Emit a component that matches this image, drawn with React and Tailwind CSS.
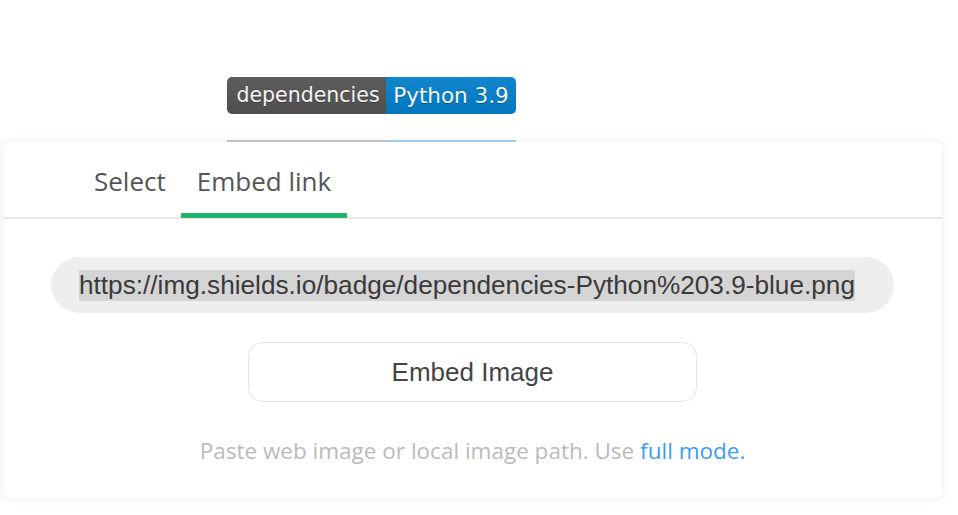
export default function App() {
  return (
    <div className="w-[958px] h-[515px] bg-white relative overflow-hidden">
      <div className="h-[142px] relative">
        <div
          className="absolute left-[227px] top-[77px] h-[37px] flex rounded-[5px] overflow-hidden text-[#f4f4f4] text-[20.5px] leading-[37px]"
          style={{ fontFamily: '"DejaVu Sans", Verdana, sans-serif' }}
        >
          <div className="w-[159px] pl-[3px] bg-gradient-to-b from-[#5c5c5c] to-[#4f4f4f] flex items-center justify-center [text-shadow:0_1px_0_rgba(1,1,1,0.3)]">
            dependencies
          </div>
          <div className="w-[130px] bg-gradient-to-b from-[#1286cc] to-[#0077bf] flex items-center justify-center text-[21.5px] [text-shadow:0_1px_0_rgba(1,1,1,0.3)]">
            Python 3.9
          </div>
        </div>
        <div className="absolute left-[227px] top-[140px] h-[2px] flex">
          <div className="w-[159px] bg-[#c8c8c8]" />
          <div className="w-[130px] bg-[#a8d4f0]" />
        </div>
      </div>
      <div className="ml-[3px] w-[939px] h-[356px] bg-white rounded-[5px] shadow-[0_0_10px_rgba(0,0,0,0.09)] relative">
        <div
          className="h-[77px] border-b-2 border-[#e8e8e8] flex items-end pl-[74px]"
          style={{ fontFamily: '"Open Sans", sans-serif' }}
        >
          <div className="pl-[17px] pr-[15px] h-full flex items-center text-[26px] text-[#555] pt-[4px]">Select</div>
          <div className="px-[16px] h-full flex items-center text-[26px] text-[#555] pt-[4px] relative">
            Embed link
            <div className="absolute left-0 right-0 bottom-[-1px] h-[5px] bg-[#21b46c]" />
          </div>
        </div>
        <div className="px-[48px] pt-[38px]">
          <div
            className="h-[56px] rounded-full bg-[#eeeeee] flex items-center pl-[28px] text-[26.2px] text-[#3a3a3a]"
            style={{ fontFamily: '"Liberation Sans", Arial, sans-serif' }}
          >
            <span className="bg-[#d5d5d5] leading-[31px]">https://img.shields.io/badge/dependencies-Python%203.9-blue.png</span>
          </div>
          <div className="flex justify-center mt-[29px]">
            <div
              className="w-[449px] h-[60px] rounded-[14px] border border-[#e3e3ea] flex items-center justify-center text-[26px] text-[#444]"
              style={{ fontFamily: '"Liberation Sans", Arial, sans-serif' }}
            >
              Embed Image
            </div>
          </div>
          <div
            className="text-center mt-[32px] text-[22.5px] text-[#bbbbbb]"
            style={{ fontFamily: '"Open Sans", sans-serif' }}
          >
            Paste web image or local image path. Use <span className="text-[#3d9df5]">full mode.</span>
          </div>
        </div>
      </div>
    </div>
  );
}
